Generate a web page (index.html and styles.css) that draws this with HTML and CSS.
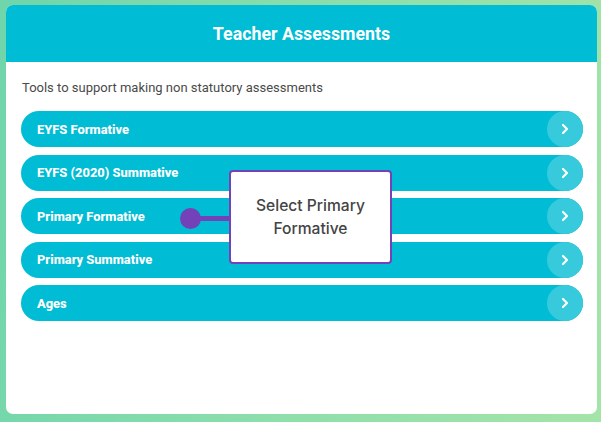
FILE: index.html
```html
<!DOCTYPE html>
<html>
<head>
<meta charset="utf-8">
<link rel="stylesheet" href="styles.css">
</head>
<body>
<div class="card">
  <div class="card-header">Teacher Assessments</div>
  <div class="card-body">
    <p class="intro">Tools to support making non statutory assessments</p>
    <div class="list">
      <div class="item"><span>EYFS Formative</span><span class="chev"><svg width="10" height="12" viewBox="0 0 10 12"><path d="M3 2l4 4-4 4" fill="none" stroke="#fff" stroke-width="2.2" stroke-linecap="round" stroke-linejoin="round"/></svg></span></div>
      <div class="item"><span>EYFS (2020) Summative</span><span class="chev"><svg width="10" height="12" viewBox="0 0 10 12"><path d="M3 2l4 4-4 4" fill="none" stroke="#fff" stroke-width="2.2" stroke-linecap="round" stroke-linejoin="round"/></svg></span></div>
      <div class="item"><span>Primary Formative</span><span class="chev"><svg width="10" height="12" viewBox="0 0 10 12"><path d="M3 2l4 4-4 4" fill="none" stroke="#fff" stroke-width="2.2" stroke-linecap="round" stroke-linejoin="round"/></svg></span></div>
      <div class="item"><span>Primary Summative</span><span class="chev"><svg width="10" height="12" viewBox="0 0 10 12"><path d="M3 2l4 4-4 4" fill="none" stroke="#fff" stroke-width="2.2" stroke-linecap="round" stroke-linejoin="round"/></svg></span></div>
      <div class="item"><span>Ages</span><span class="chev"><svg width="10" height="12" viewBox="0 0 10 12"><path d="M3 2l4 4-4 4" fill="none" stroke="#fff" stroke-width="2.2" stroke-linecap="round" stroke-linejoin="round"/></svg></span></div>
    </div>
  </div>
  <div class="pointer-dot"></div>
  <div class="pointer-line"></div>
  <div class="tooltip">Select Primary<br>Formative</div>
</div>
</body>
</html>
```

FILE: styles.css
```css
html, body {
  margin: 0;
  padding: 0;
}
body {
  width: 601px;
  height: 422px;
  background: linear-gradient(100deg, #6fd5ab 0%, #8fdfab 55%, #a4e4a9 100%);
  overflow: hidden;
  font-family: Roboto, "Liberation Sans", sans-serif;
}
.card {
  position: relative;
  margin: 5px 0 0 6px;
  width: 591px;
  height: 409px;
  background: #fff;
  border-radius: 7px;
  overflow: hidden;
}
.card-header {
  height: 57px;
  background: #00bcd4;
  color: #fff;
  font-weight: 700;
  font-size: 17.8px;
  display: flex;
  align-items: center;
  justify-content: center;
}
.card-body {
  padding: 17px 14px 0 15px;
}
.intro {
  margin: 0 0 15px 1px;
  font-size: 13px;
  line-height: 17px;
  color: #4a4a4a;
}
.list {
  display: flex;
  flex-direction: column;
  gap: 7.5px;
}
.item {
  height: 36px;
  border-radius: 18px;
  background: #00bcd4;
  color: #fff;
  font-weight: 800;
  font-size: 12.9px;
  display: flex;
  align-items: center;
  justify-content: space-between;
  padding-left: 16px;
}
.chev {
  width: 36px;
  height: 36px;
  border-radius: 50%;
  background: #36cadc;
  display: flex;
  align-items: center;
  justify-content: center;
}
.chev svg {
  display: block;
}
.pointer-dot {
  position: absolute;
  left: 174px;
  top: 203px;
  width: 21px;
  height: 21px;
  border-radius: 50%;
  background: #7442b8;
}
.pointer-line {
  position: absolute;
  left: 184px;
  top: 211px;
  width: 42px;
  height: 5px;
  background: #7442b8;
}
.tooltip {
  position: absolute;
  left: 223px;
  top: 165px;
  width: 159px;
  height: 90px;
  border: 2px solid #7442b8;
  border-radius: 4px;
  background: #fff;
  color: #444;
  font-family: Inter, "Noto Sans", sans-serif;
  font-weight: 500;
  font-size: 15.6px;
  line-height: 23px;
  display: flex;
  align-items: center;
  justify-content: center;
  text-align: center;
}
```
